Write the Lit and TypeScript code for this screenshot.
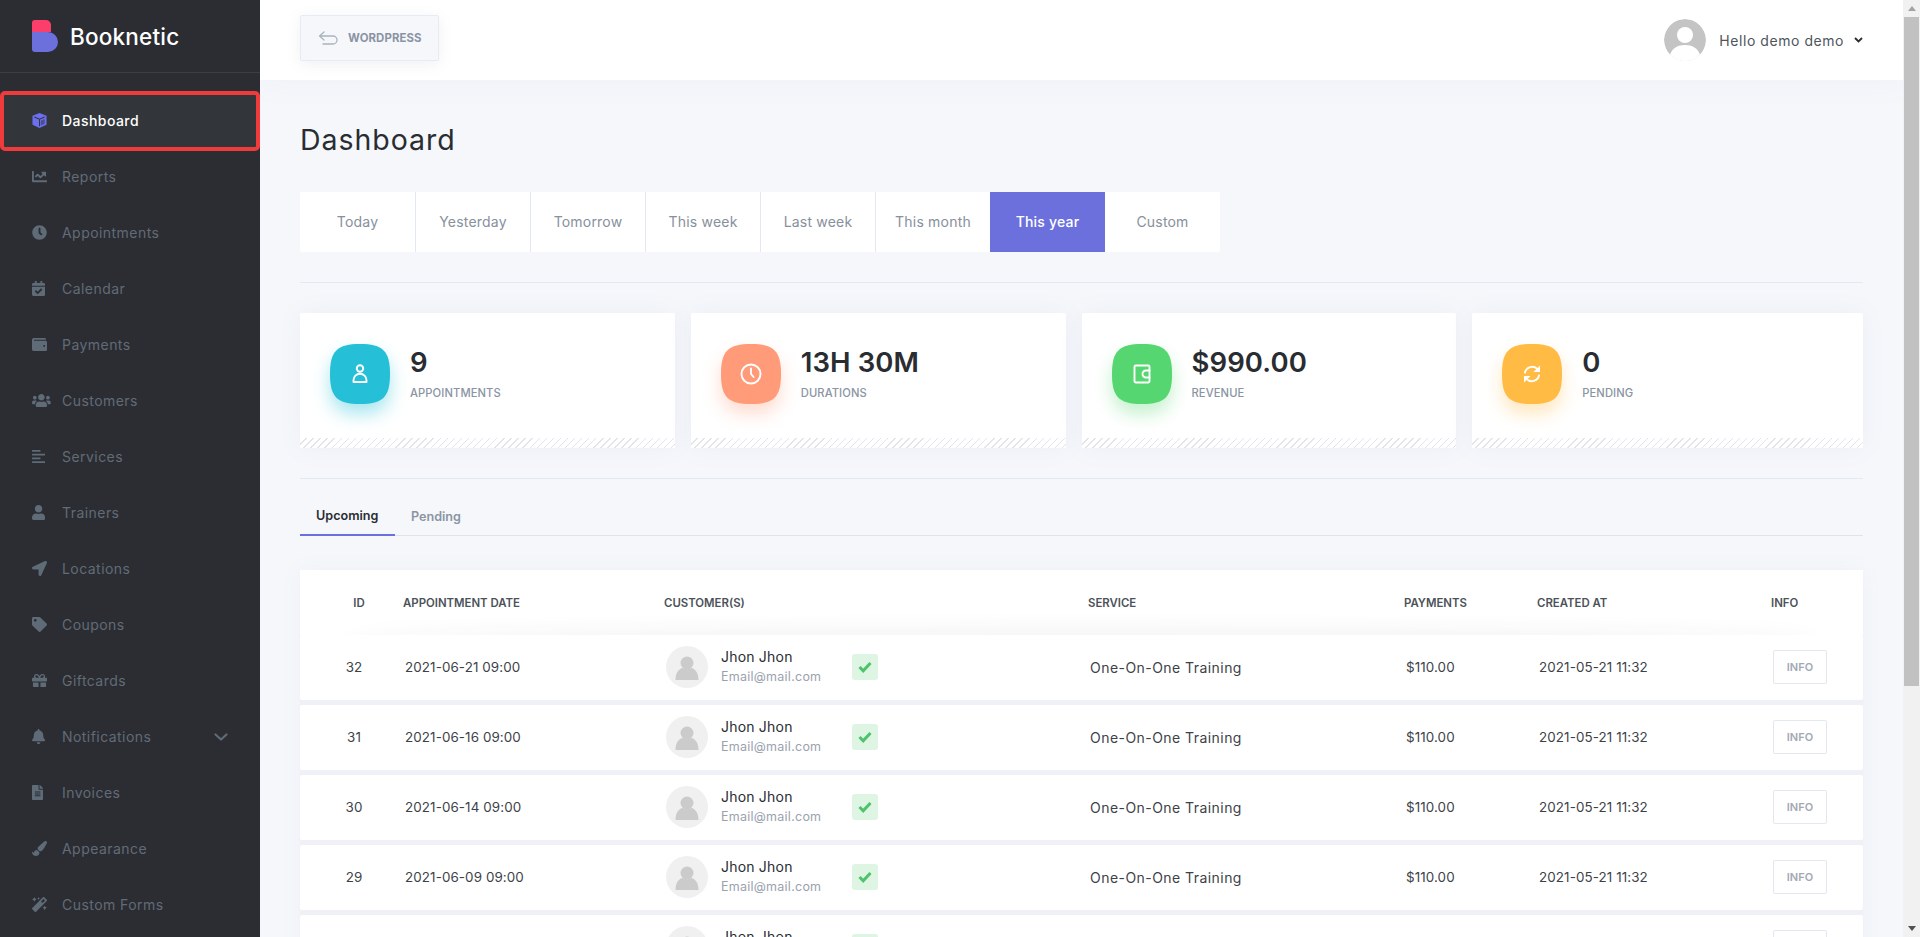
import { LitElement, html, css, svg } from "lit";
import { customElement } from "lit/decorators.js";

const FA: Record<string, [number, string]> = {
  chart: [512, "M496 384H64V80c0-8.84-7.16-16-16-16H16C7.16 64 0 71.16 0 80v336c0 17.67 14.33 32 32 32h464c8.84 0 16-7.16 16-16v-32c0-8.84-7.16-16-16-16zM464 96H345.94c-21.38 0-32.09 25.85-16.97 40.97l32.4 32.4L288 242.75l-73.37-73.37c-12.5-12.5-32.76-12.5-45.25 0l-68.69 68.69c-6.25 6.25-6.25 16.38 0 22.63l22.62 22.62c6.25 6.25 16.38 6.25 22.63 0L192 237.25l73.37 73.37c12.5 12.5 32.76 12.5 45.25 0l96-96 32.4 32.4c15.12 15.12 40.97 4.41 40.97-16.97V112c.01-8.84-7.15-16-15.99-16z"],
  clock: [512, "M256,8C119,8,8,119,8,256S119,504,256,504,504,393,504,256,393,8,256,8Zm92.49,313h0l-20,25a16,16,0,0,1-22.49,2.5h0l-67-49.72a40,40,0,0,1-15-31.23V112a16,16,0,0,1,16-16h32a16,16,0,0,1,16,16V256l58,42.5A16,16,0,0,1,348.49,321Z"],
  calendar: [448, "M436 160H12c-6.627 0-12-5.373-12-12v-36c0-26.51 21.49-48 48-48h48V12c0-6.627 5.373-12 12-12h40c6.627 0 12 5.373 12 12v52h128V12c0-6.627 5.373-12 12-12h40c6.627 0 12 5.373 12 12v52h48c26.51 0 48 21.49 48 48v36c0 6.627-5.373 12-12 12zM12 192h424c6.627 0 12 5.373 12 12v260c0 26.51-21.49 48-48 48H48c-26.51 0-48-21.49-48-48V204c0-6.627 5.373-12 12-12zm333.296 95.947l-28.169-28.398c-4.667-4.705-12.265-4.736-16.97-.068L194.12 364.665l-45.98-46.352c-4.667-4.705-12.266-4.736-16.971-.068l-28.397 28.17c-4.705 4.667-4.736 12.265-.068 16.97l82.601 83.269c4.667 4.705 12.265 4.736 16.97.068l142.953-141.805c4.705-4.667 4.736-12.265.068-16.97z"],
  wallet: [512, "M461.2 128H80c-8.84 0-16-7.16-16-16s7.16-16 16-16h384c8.84 0 16-7.16 16-16 0-26.51-21.49-48-48-48H64C28.65 32 0 60.65 0 96v320c0 35.35 28.65 64 64 64h397.2c28.02 0 50.8-21.53 50.8-48V176c0-26.47-22.78-48-50.8-48zM416 336c-17.67 0-32-14.33-32-32s14.33-32 32-32 32 14.33 32 32-14.33 32-32 32z"],
  users: [640, "M96 224c35.3 0 64-28.7 64-64s-28.7-64-64-64-64 28.7-64 64 28.7 64 64 64zm448 0c35.3 0 64-28.7 64-64s-28.7-64-64-64-64 28.7-64 64 28.7 64 64 64zm32 32h-64c-17.6 0-33.5 7.1-45.1 18.6 40.3 22.1 68.9 62 75.1 109.4h66c17.7 0 32-14.3 32-32v-32c0-35.3-28.7-64-64-64zm-256 0c61.9 0 112-50.1 112-112S381.9 32 320 32 208 82.1 208 144s50.1 112 112 112zm76.8 32h-8.3c-20.8 10-43.9 16-68.5 16s-47.6-6-68.5-16h-8.3C179.6 288 128 339.6 128 403.2V432c0 26.5 21.5 48 48 48h288c26.5 0 48-21.5 48-48v-28.8c0-63.6-51.6-115.2-115.2-115.2zm-223.7-13.4C161.5 263.1 145.6 256 128 256H64c-35.3 0-64 28.7-64 64v32c0 17.7 14.3 32 32 32h65.9c6.3-47.4 34.9-87.3 75.2-109.4z"],
  align: [448, "M12.83 352h262.34A12.82 12.82 0 0 0 288 339.17v-38.34A12.82 12.82 0 0 0 275.17 288H12.83A12.82 12.82 0 0 0 0 300.83v38.34A12.82 12.82 0 0 0 12.83 352zm0-256h262.34A12.82 12.82 0 0 0 288 83.17V44.83A12.82 12.82 0 0 0 275.17 32H12.83A12.82 12.82 0 0 0 0 44.83v38.34A12.82 12.82 0 0 0 12.83 96zM432 160H16a16 16 0 0 0-16 16v32a16 16 0 0 0 16 16h416a16 16 0 0 0 16-16v-32a16 16 0 0 0-16-16zm0 256H16a16 16 0 0 0-16 16v32a16 16 0 0 0 16 16h416a16 16 0 0 0 16-16v-32a16 16 0 0 0-16-16z"],
  user: [448, "M224 256c70.7 0 128-57.3 128-128S294.7 0 224 0 96 57.3 96 128s57.3 128 128 128zm89.6 32h-16.7c-22.2 10.2-46.9 16-72.9 16s-50.6-5.8-72.9-16h-16.7C60.2 288 0 348.2 0 422.4V464c0 26.5 21.5 48 48 48h352c26.5 0 48-21.5 48-48v-41.6c0-74.2-60.2-134.4-134.4-134.4z"],
  arrow: [512, "M444.52 3.52L28.74 195.42c-47.97 22.39-31.98 92.75 19.19 92.75h175.91v175.91c0 51.17 70.36 67.17 92.75 19.19l191.9-415.78c15.99-38.39-25.59-79.97-63.97-63.97z"],
  tag: [512, "M0 252.118V48C0 21.49 21.49 0 48 0h204.118a48 48 0 0 1 33.941 14.059l211.882 211.882c18.745 18.745 18.745 49.137 0 67.882L293.823 497.941c-18.745 18.745-49.137 18.745-67.882 0L14.059 286.059A48 48 0 0 1 0 252.118zM112 64c-26.51 0-48 21.49-48 48s21.49 48 48 48 48-21.49 48-48-21.49-48-48-48z"],
  gift: [512, "M32 448c0 17.7 14.3 32 32 32h160V320H32v128zm256 32h160c17.7 0 32-14.3 32-32V320H288v160zm192-320h-42.1c6.2-12.1 10.1-25.5 10.1-40 0-48.5-39.5-88-88-88-41.6 0-68.5 21.3-103 68.3-34.5-47-61.4-68.3-103-68.3-48.5 0-88 39.5-88 88 0 14.5 3.8 27.9 10.1 40H32c-17.7 0-32 14.3-32 32v80c0 8.8 7.2 16 16 16h480c8.8 0 16-7.2 16-16v-80c0-17.7-14.3-32-32-32zm-326.1 0c-22.1 0-40-17.9-40-40s17.9-40 40-40c19.9 0 34.6 3.3 86.1 80h-86.1zm206.1 0h-86.1c51.4-76.5 65.7-80 86.1-80 22.1 0 40 17.9 40 40s-17.9 40-40 40z"],
  bell: [448, "M224 512c35.32 0 63.97-28.65 63.97-64H160.03c0 35.35 28.65 64 63.97 64zm215.39-149.71c-19.32-20.76-55.47-51.99-55.47-154.29 0-77.7-54.48-139.9-127.94-155.16V32c0-17.67-14.32-32-31.98-32s-31.98 14.33-31.98 32v20.84C118.56 68.1 64.08 130.3 64.08 208c0 102.3-36.15 133.53-55.47 154.29-6 6.45-8.66 14.16-8.61 21.71.11 16.4 12.98 32 32.1 32h383.8c19.12 0 32-15.6 32.1-32 .05-7.55-2.61-15.27-8.61-21.71z"],
  file: [384, "M224 136V0H24C10.7 0 0 10.7 0 24v464c0 13.3 10.7 24 24 24h336c13.3 0 24-10.7 24-24V160H248c-13.2 0-24-10.8-24-24zm64 236c0 6.6-5.4 12-12 12H108c-6.6 0-12-5.4-12-12v-8c0-6.6 5.4-12 12-12h168c6.6 0 12 5.4 12 12v8zm0-64c0 6.6-5.4 12-12 12H108c-6.6 0-12-5.4-12-12v-8c0-6.6 5.4-12 12-12h168c6.6 0 12 5.4 12 12v8zm0-72v8c0 6.6-5.4 12-12 12H108c-6.6 0-12-5.4-12-12v-8c0-6.6 5.4-12 12-12h168c6.6 0 12 5.4 12 12zm96-114.1v6.1H256V0h6.1c6.4 0 12.5 2.5 17 7l97.9 98c4.5 4.5 7 10.6 7 16.9z"],
  brush: [512, "M167.02 309.34c-40.12 2.58-76.53 17.86-97.19 72.3-2.35 6.21-8 9.98-14.59 9.98-11.11 0-45.46-27.67-55.25-34.35C0 439.62 37.93 512 128 512c75.86 0 128-43.77 128-120.19 0-3.11-.65-6.08-.97-9.13l-88.01-73.34zM457.89 0c-15.16 0-29.37 6.71-40.21 16.45C213.27 199.05 192 203.34 192 257.09c0 13.7 3.25 26.76 8.73 38.7l63.82 53.18c7.21 1.8 14.64 3.03 22.39 3.03 62.11 0 98.11-45.47 211.16-256.46 7.38-14.35 13.9-29.85 13.9-45.99C512 20.64 486 0 457.89 0z"],
  magic: [512, "M224 96l16-32 32-16-32-16-16-32-16 32-32 16 32 16 16 32zM80 160l26.66-53.33L160 80l-53.34-26.67L80 0 53.34 53.33 0 80l53.34 26.67L80 160zm352 128l-26.66 53.33L352 368l53.34 26.67L432 448l26.66-53.33L512 368l-53.34-26.67L432 288zm70.62-193.77L417.77 9.38C411.53 3.12 403.34 0 395.15 0c-8.19 0-16.38 3.12-22.63 9.38L9.38 372.52c-12.5 12.5-12.5 32.76 0 45.25l84.85 84.85c6.25 6.25 14.44 9.37 22.62 9.37 8.19 0 16.38-3.12 22.63-9.37l363.14-363.15c12.5-12.48 12.5-32.75 0-45.24zM359.45 203.46l-50.91-50.91 86.6-86.6 50.91 50.91-86.6 86.6z"],
};

const fa = (k: string) => {
  const [w, d] = FA[k];
  return html`<svg class="fa" viewBox="0 0 ${w} 512" style="width:${(15 * w) / 512}px"><path fill="currentColor" d=${d}></path></svg>`;
};

const NAV: [string, string][] = [
  ["chart", "Reports"], ["clock", "Appointments"], ["calendar", "Calendar"], ["wallet", "Payments"],
  ["users", "Customers"], ["align", "Services"], ["user", "Trainers"], ["arrow", "Locations"],
  ["tag", "Coupons"], ["gift", "Giftcards"], ["bell", "Notifications"], ["file", "Invoices"],
  ["brush", "Appearance"], ["magic", "Custom Forms"],
];

const PERIODS = ["Today", "Yesterday", "Tomorrow", "This week", "Last week", "This month", "This year", "Custom"];

const STAT_ICONS: Record<string, unknown> = {
  user: svg`<circle cx="12" cy="6.500" r="3.200"/><path d="M5.500 20v-1.800a6.500 6.500 0 0 1 13 0V20z"/>`,
  clock: svg`<circle cx="12" cy="12" r="9.500"/><path d="M12 6.500V12l2.600 3"/>`,
  wallet: svg`<rect x="4.500" y="3.500" width="15" height="17" rx="1.200"/><path d="M19.500 8.500h-3.500a3.500 3.500 0 0 0 0 7h3.500"/>`,
  sync: svg`<path d="M5 10.500A7.300 7.300 0 0 1 17.500 7.200L19 9"/><path d="M20 3.500V10H13.500z" fill="#fff" stroke-width="0"/><path d="M19 13.500A7.300 7.300 0 0 1 6.500 16.800L5 15"/><path d="M4 20.500V14H10.500z" fill="#fff" stroke-width="0"/>`,
};

const STATS = [
  { c: "#25c0d7", s: "rgba(37,192,215,.4)", i: "user", v: "9", l: "APPOINTMENTS" },
  { c: "#ff9b78", s: "rgba(255,155,120,.35)", i: "clock", v: "13H 30M", l: "DURATIONS" },
  { c: "#55d670", s: "rgba(85,214,112,.35)", i: "wallet", v: "$990.00", l: "REVENUE" },
  { c: "#ffbb44", s: "rgba(255,187,68,.35)", i: "sync", v: "0", l: "PENDING" },
];

const ROWS = [
  ["32", "2021-06-21 09:00"],
  ["31", "2021-06-16 09:00"],
  ["30", "2021-06-14 09:00"],
  ["29", "2021-06-09 09:00"],
  ["28", "2021-06-07 09:00"],
];

const PERSON = svg`<circle cx="21" cy="17" r="6.500"/><path d="M9.500 34c0-8 4-11.500 7-12 2.500 1.500 6.500 1.500 9 0 3 .5 7 4 7 12z"/>`;

@customElement("app-root")
export class AppRoot extends LitElement {
  static styles = css`
    :host {
      display: flex;
      width: 100%;
      height: 937px;
      overflow: hidden;
      background: #f5f7fb;
      font-family: Inter, "Open Sans", sans-serif;
      color: #292d32;
    }
    * { box-sizing: border-box; }

    /* sidebar */
    .side { width: 260px; flex: none; background: #2b2d33; height: 100%; overflow: hidden; }
    .brand {
      height: 73px; border-bottom: 1px solid #3b3e44;
      display: flex; align-items: center; gap: 12px; padding-left: 32px;
      color: #fff; font-size: 22.5px; font-weight: 500; letter-spacing: .2px;
    }
    .brand svg { width: 26px; height: 32px; flex: none; margin-bottom: 1px; }
    .nav { display: flex; flex-direction: column; padding-top: 20px; }
    .item {
      height: 56px; display: flex; align-items: center; padding: 0 0 1px 32px;
      color: #626b76; font-size: 14px; letter-spacing: .45px; position: relative;
    }
    .item.active { margin-top: -2px; height: 60px; margin-bottom: -2px; color: #fff; background: #32353a; border: 4px solid #ef3b3b; border-radius: 5px; padding-left: 28px; font-weight: 500; }
    .item.active .ic { color: #6c70f0; }
    .ic { width: 30px; flex: none; display: flex; align-items: center; color: #5f6b77; }
    .fa { height: 15px; display: block; }
    .more { position: absolute; right: 32px; top: 50%; margin-top: -4px; width: 14px; height: 8px; }

    /* main */
    .main { flex: 1; min-width: 0; display: flex; flex-direction: column; height: 100%; overflow: hidden; }
    .top {
      height: 80px; flex: none; background: #fff; display: flex; align-items: center;
      justify-content: space-between; padding: 0 40px;
      box-shadow: 0 4px 30px rgba(120,130,160,.05);
    }
    .wp {
      width: 139px; height: 46px; margin-top: -4px; background: #f5f7fb; border: 1px solid #e6ebf5; border-radius: 2px;
      box-shadow: 0 3px 14px rgba(120,130,160,.12);
      display: flex; align-items: center; gap: 10px; padding-left: 17px;
      color: #8a94a3; font-size: 11.4px; font-weight: 700; letter-spacing: .1px;
    }
    .wp svg { width: 20px; height: 14px; flex: none; }
    .hello { display: flex; align-items: center; font-size: 14px; color: #50555c; letter-spacing: .55px; }
    .hello .av { width: 42px; height: 42px; border-radius: 50%; margin-right: 13px; display: block; }
    .hello .car { width: 9px; height: 6px; margin-left: 10px; }

    .content { padding: 0 40px; flex: 1; }
    h1 { margin: 0; height: 112px; padding-top: 34px; display: flex; align-items: flex-start; font-size: 28.5px; font-weight: 400; line-height: 52px; color: #292d32; letter-spacing: .95px; }
    .periods { display: flex; height: 60px; }
    .p {
      width: 115px; background: #fff; color: #87909c; font-size: 14px; letter-spacing: .2px; padding-bottom: 1px;
      display: flex; align-items: center; justify-content: center; border-left: 1px solid #e3e9f3;
    }
    .p:first-child { border-left: 0; border-radius: 2px 0 0 2px; }
    .p:last-child { border-left: 0; border-radius: 0 2px 2px 0; }
    .p.on { background: #6c70dc; color: #fff; border-left: 0; font-weight: 500; }
    .hr { height: 1px; background: #e3e9f3; margin-top: 30px; }
    .stats { display: grid; grid-template-columns: repeat(4, 1fr); margin-top: 30px; }
    .cardw { padding-right: 16px; }
    .cardw:last-child { padding-right: 0; }
    .card {
      height: 135px; background: #fff; border-radius: 2px 2px 0 0; position: relative;
      padding: 31px 30px 0; display: flex; gap: 20px;
      box-shadow: 0 0 24px rgba(120,130,160,.07);
    }
    .card::after {
      content: ""; position: absolute; left: 0; right: 0; bottom: 0; height: 10px;
      background: repeating-linear-gradient(135deg, #fff 0 4px, #e2e4ea 4px 5px);
    }
    .blob { width: 60px; height: 60px; flex: none; position: relative; display: block; }
    .blob .s { width: 60px; height: 60px; display: block; overflow: visible; }
    .blob .g { position: absolute; left: 18px; top: 18px; width: 24px; height: 24px; fill: none; stroke: #fff; stroke-width: 1.900; stroke-linecap: round; stroke-linejoin: round; }
    .vals { display: flex; flex-direction: column; }
    .v { font-size: 27.5px; font-weight: 600; line-height: 36px; color: #292d32; letter-spacing: .1px; }
    .l { margin-top: 5px; font-size: 11.2px; font-weight: 500; color: #8a94a3; line-height: 16px; letter-spacing: .1px; }

    .tabs { display: flex; height: 57px; border-bottom: 1px solid #dfe3ea; }
    .t { height: 56px; width: 111px; display: flex; align-items: center; padding-left: 16px; padding-top: 18px; font-size: 12.600px; font-weight: 600; color: #8a94a3; }
    .t.on { width: 95px; height: 57px; color: #292d32; border-bottom: 2px solid #6c70dc; }

    .table { margin-top: 34px; display: flex; flex-direction: column; gap: 5px; background: #eff1f6; box-shadow: 0 0 20px rgba(120,130,160,.06); }
    .thead {
      height: 65px; background: #fff; display: grid; align-items: center; font-size: 11.4px; font-weight: 600; color: #4c5259;
      margin-bottom: -5px; position: relative; overflow: hidden;
    }
    .thead::after { content: ""; position: absolute; left: 3%; right: 3%; bottom: -14px; height: 14px; border-radius: 50%; box-shadow: 0 0 22px 4px rgba(40,50,70,.07); pointer-events: none; }
    .thead, .row { grid-template-columns: 103px 261px 424px 316px 133px 234px 92px; }
    .thead > span { position: relative; z-index: 1; }
    .idh { text-align: center; padding-left: 15px; }
    .row {
      height: 65px; flex: none; background: #fff; display: grid; align-items: center; font-size: 13.4px; color: #3d4248; border-radius: 2px; letter-spacing: .1px; padding-bottom: 1px;
    }
    .row > span { padding-left: 2px; }
    .row .id { text-align: center; padding-left: 5px; }
    .row .svc { font-size: 14px; letter-spacing: .45px; }
    .cust { display: flex; align-items: center; }
    .cust .ph { width: 42px; height: 42px; border-radius: 50%; background: #f0f0f0; fill: #cbcbcb; display: block; flex: none; }
    .who { margin-left: 13px; width: 131px; display: flex; flex-direction: column; }
    .who b { font-weight: 400; font-size: 14px; line-height: 20px; color: #292d32; letter-spacing: .2px; }
    .who i { font-style: normal; font-size: 12.500px; line-height: 20px; color: #9aa2ae; letter-spacing: .25px; }
    .ok { width: 26px; height: 26px; border-radius: 3px; background: #dff5e3; display: flex; align-items: center; justify-content: center; flex: none; }
    .ok svg { width: 14px; height: 12px; }
    .btn {
      width: 54px; height: 34px; border: 1px solid #e4e8ee; border-radius: 2px; display: flex; align-items: center; justify-content: center;
      font-size: 11px; font-weight: 600; color: #a2a9b3; background: #fff;
    }

    .sb { width: 17px; flex: none; background: #f1f1f1; height: 100%; display: flex; flex-direction: column; }
    .sb .up, .sb .dn { height: 17px; flex: none; display: flex; align-items: center; justify-content: center; }
    .sb .up::before { content: ""; border: 4px solid transparent; border-top: 0; border-bottom: 5px solid #a3a3a3; }
    .sb .dn::before { content: ""; border: 4px solid transparent; border-bottom: 0; border-top: 5px solid #505050; }
    .sb .th { height: 669px; flex: none; margin: 0 1px; background: #c1c1c1; }
    .sb .sp { flex: 1; }
  `;

  render() {
    return html`
      <aside class="side">
        <div class="brand">
          <svg viewBox="0 0 26 32">
            <path fill="#6c70dc" d="M0 12h16a10 10 0 0 1 10 10 10 10 0 0 1-10 10H3a3 3 0 0 1-3-3z"></path>
            <path fill="#fc3e6b" d="M3 0h11a5 5 0 0 1 5 5v7H0V3a3 3 0 0 1 3-3z"></path>
          </svg>
          <span>Booknetic</span>
        </div>
        <nav class="nav">
          <div class="item active">
            <span class="ic"><svg class="fa" viewBox="0 0 16 16" style="width:15px"><path fill="currentColor" d="M8 0 15.500 3v9.500L8 16 .5 12.500V3z"></path><path fill="none" stroke="#32353a" stroke-width="1.100" d="M2.500 4.200 8 6.600l5.500-2.400M8 6.600v7.500"></path><path fill="#32353a" d="M9.300 8.300l4.200-1.800v4.900l-4.200 2z" opacity=".55"></path></svg></span>Dashboard
          </div>
          ${NAV.map(
            ([i, t]) => html`<div class="item"><span class="ic">${fa(i)}</span>${t}
              ${t === "Notifications"
                ? html`<svg class="more" viewBox="0 0 14 8"><path d="M1.500 1.500 7 6.500l5.500-5" fill="none" stroke="#5f6b77" stroke-width="2.200" stroke-linecap="round" stroke-linejoin="round"></path></svg>`
                : ""}
            </div>`
          )}
        </nav>
      </aside>
      <div class="main">
        <header class="top">
          <div class="wp">
            <svg viewBox="0 0 20 14"><path d="M6 1 1.500 5l4.500 4M2 5h13a3.800 3.800 0 0 1 0 8H5" fill="none" stroke="#a9b4bd" stroke-width="1.300" stroke-linecap="round" stroke-linejoin="round"></path></svg>
            WORDPRESS
          </div>
          <div class="hello">
            <svg class="av" viewBox="0 0 42 42"><circle cx="21" cy="21" r="21" fill="#c4c4c4"></circle><circle cx="21" cy="16" r="8" fill="#fff"></circle><path d="M6 36c2-7 8-10 15-10s13 3 15 10a21 21 0 0 1-30 0z" fill="#fff"></path></svg>
            Hello demo demo
            <svg class="car" viewBox="0 0 9 6"><path d="M1 1 4.500 4.500 8 1" fill="none" stroke="#292d32" stroke-width="1.800"></path></svg>
          </div>
        </header>
        <div class="content">
          <h1>Dashboard</h1>
          <div class="periods">
            ${PERIODS.map((p) => html`<div class="p ${p === "This year" ? "on" : ""}">${p}</div>`)}
          </div>
          <div class="hr"></div>
          <div class="stats">
            ${STATS.map(
              (s) => html`<div class="cardw"><div class="card">
                <span class="blob">
                  <svg class="s" viewBox="0 0 60 60" style="filter:drop-shadow(0 10px 9px ${s.s})">
                    <path fill=${s.c} d="M30 0C53 0 60 7 60 30S53 60 30 60 0 53 0 30 7 0 30 0Z"></path>
                  </svg>
                  <svg class="g" viewBox="0 0 24 24">${STAT_ICONS[s.i]}</svg>
                </span>
                <div class="vals"><div class="v">${s.v}</div><div class="l">${s.l}</div></div>
              </div></div>`
            )}
          </div>
          <div class="hr"></div>
          <div class="tabs"><div class="t on">Upcoming</div><div class="t">Pending</div></div>
          <div class="table">
            <div class="thead">
              <span class="idh">ID</span><span>APPOINTMENT DATE</span><span>CUSTOMER(S)</span><span>SERVICE</span><span>PAYMENTS</span><span>CREATED AT</span><span>INFO</span>
            </div>
            ${ROWS.map(
              ([id, d]) => html`<div class="row">
                <span class="id">${id}</span>
                <span>${d}</span>
                <span class="cust">
                  <svg class="ph" viewBox="0 0 42 42">${PERSON}</svg>
                  <span class="who"><b>Jhon Jhon</b><i>Email@mail.com</i></span>
                  <span class="ok"><svg viewBox="0 0 14 12"><path d="M1.500 6 5.200 9.800 12.500 2" fill="none" stroke="#4fc36b" stroke-width="3"></path></svg></span>
                </span>
                <span class="svc">One-On-One Training</span>
                <span>$110.00</span>
                <span>2021-05-21 11:32</span>
                <span><div class="btn">INFO</div></span>
              </div>`
            )}
          </div>
        </div>
      </div>
      <div class="sb"><div class="up"></div><div class="th"></div><div class="sp"></div><div class="dn"></div></div>
    `;
  }
}
